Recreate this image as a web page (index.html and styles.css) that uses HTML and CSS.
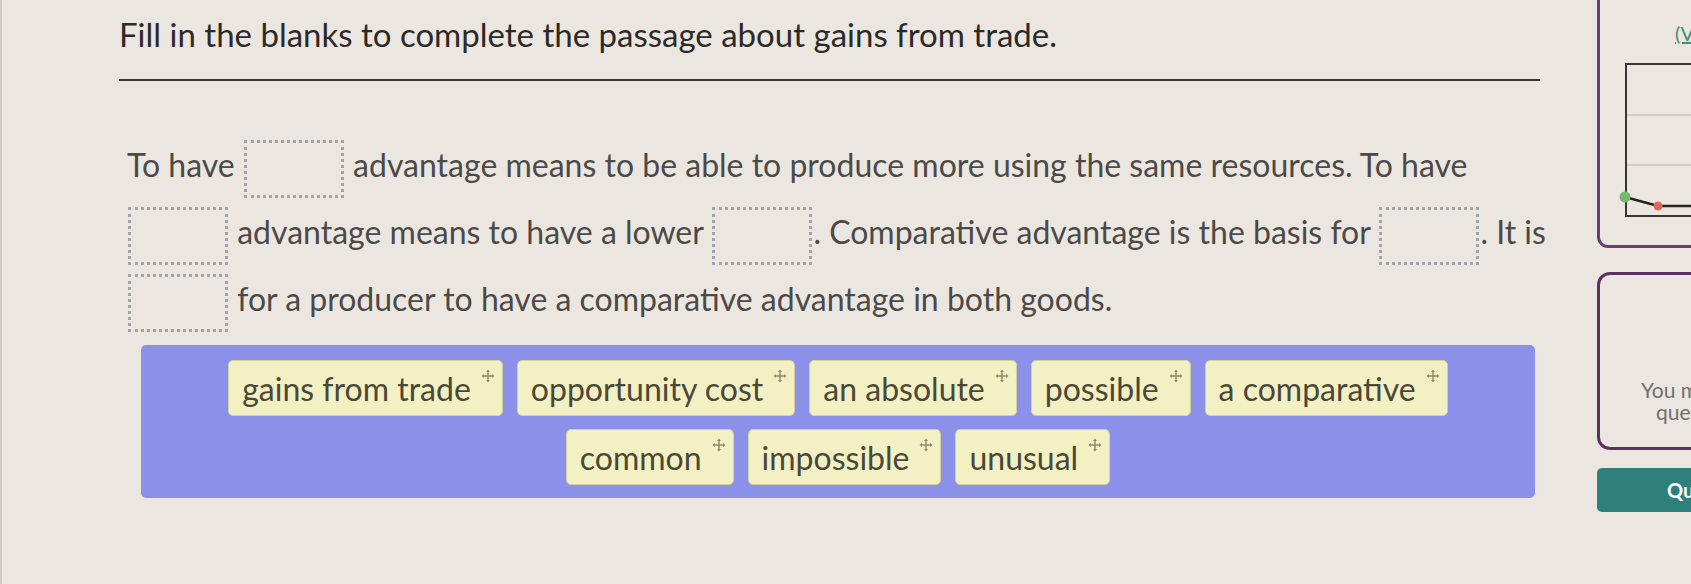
FILE: index.html
```html
<!DOCTYPE html>
<html lang="en">
<head>
<meta charset="utf-8">
<title>Gains from trade</title>
<link rel="stylesheet" href="styles.css">
</head>
<body>
<div class="screen">
  <main class="question">
    <h1 class="prompt">Fill in the blanks to complete the passage about gains from trade.</h1>
    <hr class="rule">
    <p class="passage">To have <span class="blank"></span> advantage means to be able to produce more using the same resources. To have <span class="blank"></span> advantage means to have a lower <span class="blank"></span>. Comparative advantage is the basis for <span class="blank"></span>. It is <span class="blank"></span> for a producer to have a comparative advantage in both goods.</p>
    <div class="bank">
      <div class="bank-row">
        <span class="chip">gains from trade<svg class="move" viewBox="0 0 14 14"><path class="stem" d="M7 2.5V11.5M2.5 7H11.5"/><path class="head" d="M7 0.5L9 3H5ZM7 13.5L9 11H5ZM0.5 7L3 5V9ZM13.5 7L11 5V9Z"/></svg></span>
        <span class="chip">opportunity cost<svg class="move" viewBox="0 0 14 14"><path class="stem" d="M7 2.5V11.5M2.5 7H11.5"/><path class="head" d="M7 0.5L9 3H5ZM7 13.5L9 11H5ZM0.5 7L3 5V9ZM13.5 7L11 5V9Z"/></svg></span>
        <span class="chip">an absolute<svg class="move" viewBox="0 0 14 14"><path class="stem" d="M7 2.5V11.5M2.5 7H11.5"/><path class="head" d="M7 0.5L9 3H5ZM7 13.5L9 11H5ZM0.5 7L3 5V9ZM13.5 7L11 5V9Z"/></svg></span>
        <span class="chip">possible<svg class="move" viewBox="0 0 14 14"><path class="stem" d="M7 2.5V11.5M2.5 7H11.5"/><path class="head" d="M7 0.5L9 3H5ZM7 13.5L9 11H5ZM0.5 7L3 5V9ZM13.5 7L11 5V9Z"/></svg></span>
        <span class="chip">a comparative<svg class="move" viewBox="0 0 14 14"><path class="stem" d="M7 2.5V11.5M2.5 7H11.5"/><path class="head" d="M7 0.5L9 3H5ZM7 13.5L9 11H5ZM0.5 7L3 5V9ZM13.5 7L11 5V9Z"/></svg></span>
      </div>
      <div class="bank-row">
        <span class="chip">common<svg class="move" viewBox="0 0 14 14"><path class="stem" d="M7 2.5V11.5M2.5 7H11.5"/><path class="head" d="M7 0.5L9 3H5ZM7 13.5L9 11H5ZM0.5 7L3 5V9ZM13.5 7L11 5V9Z"/></svg></span>
        <span class="chip">impossible<svg class="move" viewBox="0 0 14 14"><path class="stem" d="M7 2.5V11.5M2.5 7H11.5"/><path class="head" d="M7 0.5L9 3H5ZM7 13.5L9 11H5ZM0.5 7L3 5V9ZM13.5 7L11 5V9Z"/></svg></span>
        <span class="chip">unusual<svg class="move" viewBox="0 0 14 14"><path class="stem" d="M7 2.5V11.5M2.5 7H11.5"/><path class="head" d="M7 0.5L9 3H5ZM7 13.5L9 11H5ZM0.5 7L3 5V9ZM13.5 7L11 5V9Z"/></svg></span>
      </div>
    </div>
  </main>
  <aside class="side">
    <div class="panel graph-panel">
      <a class="view-link">(View graph)</a>
      <svg class="graph" viewBox="0 0 200 155" width="200" height="155">
        <rect class="axes" x="1" y="1" width="260" height="152"/>
        <line class="grid" x1="2" y1="52" x2="200" y2="52"/>
        <line class="grid" x1="2" y1="102" x2="200" y2="102"/>
        <polyline class="curve" points="0,134 33,143 200,143"/>
        <circle class="pt-green" cx="0" cy="134" r="5.5"/>
        <circle class="pt-red" cx="33" cy="143" r="4.5"/>
      </svg>
    </div>
    <div class="panel hint-panel">
      <p class="hint"><span class="hint-line">You must answer</span><span class="hint-line hint-indent">question</span></p>
    </div>
    <button class="btn">Question Help</button>
  </aside>
</div>
</body>
</html>
```
FILE: styles.css
```css
html, body {
  margin: 0;
  padding: 0;
}
body {
  width: 1691px;
  height: 584px;
  overflow: hidden;
  background: #ebe7e0;
  font-family: "Lato", "Noto Sans", sans-serif;
}
.screen {
  display: flex;
  align-items: flex-start;
  width: 1691px;
  height: 584px;
  overflow: hidden;
  border-left: 2px solid #cfcbc4;
  box-sizing: border-box;
}
.question {
  flex: 0 0 auto;
  width: 1595px;
  box-sizing: border-box;
  padding-left: 117px;
  padding-right: 55px;
}
.prompt {
  margin: 15px 0 0;
  font-size: 33px;
  line-height: 38px;
  font-weight: 400;
  color: #2b2a28;
}
.rule {
  margin: 26px 0 0;
  height: 0;
  border: 0;
  border-top: 2px solid #353331;
  width: 1421px;
}
.passage {
  margin: 50px 0 0 8px;
  width: 1420px;
  font-size: 32px;
  line-height: 67px;
  color: #4b4a48;
}
.blank {
  display: inline-block;
  width: 94px;
  height: 52px;
  border: 3px dotted #a2a2ab;
  vertical-align: middle;
  margin: 0 1px;
}
.bank {
  margin: 13px 0 0 22px;
  width: 1394px;
  box-sizing: border-box;
  padding: 15px 15px 13px;
  background: #8b91e8;
  border-radius: 5px;
  display: flex;
  flex-direction: column;
  gap: 13px;
}
.bank-row {
  display: flex;
  justify-content: center;
  gap: 14px;
}
.chip {
  display: inline-flex;
  align-items: center;
  height: 56px;
  box-sizing: border-box;
  padding: 0 7px 0 13px;
  gap: 10px;
  background: #f3f0c4;
  border: 1px solid #d6d09e;
  border-radius: 5px;
  font-size: 32px;
  color: #4a4838;
}
.move {
  align-self: flex-start;
  margin-top: 8px;
  width: 14px;
  height: 14px;
}
.move .stem {
  fill: none;
  stroke: #8f8a68;
  stroke-width: 1.4;
}
.move .head {
  fill: #8f8a68;
}
.side {
  flex: 0 0 auto;
  width: 320px;
  display: flex;
  flex-direction: column;
}
.panel {
  box-sizing: border-box;
  width: 320px;
  border: 3px solid #6a3c74;
  border-radius: 11px;
}
.graph-panel {
  margin-top: -10px;
  height: 258px;
  display: flex;
  flex-direction: column;
}
.view-link {
  margin: 28px 0 0 75px;
  font-size: 20px;
  line-height: 24px;
  color: #3f8f78;
  text-decoration: underline;
}
.graph {
  margin: 18px 0 0 25px;
  overflow: visible;
}
.axes {
  fill: none;
  stroke: #3a3434;
  stroke-width: 2;
}
.grid {
  stroke: #c9c5c0;
  stroke-width: 1.5;
}
.curve {
  fill: none;
  stroke: #222;
  stroke-width: 2.5;
}
.pt-green {
  fill: #74b96e;
}
.pt-red {
  fill: #e2685a;
}
.hint-panel {
  margin-top: 24px;
  height: 178px;
  border-color: #5c3262;
  border-radius: 13px;
  padding-top: 104px;
}
.hint {
  margin: 0;
  font-size: 21px;
  line-height: 22px;
  color: #707070;
}
.hint-line {
  display: block;
  padding-left: 41px;
}
.hint-indent {
  padding-left: 56px;
}
.btn {
  margin-top: 18px;
  width: 320px;
  height: 44px;
  border: 0;
  border-radius: 5px;
  background: #2f7f7c;
  color: #fff;
  font-family: "Lato", "Noto Sans", sans-serif;
  font-weight: 700;
  font-size: 20px;
  text-align: left;
  padding-left: 70px;
}
```
